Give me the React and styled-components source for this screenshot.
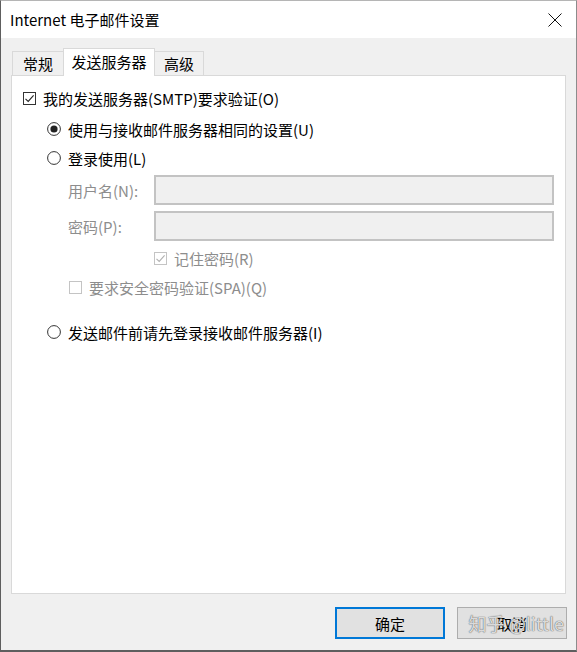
import React, { useState } from 'react'
import styled, { createGlobalStyle } from 'styled-components'

const Global = createGlobalStyle`
  html, body { margin: 0; padding: 0; background: #ffffff; }
  * { box-sizing: border-box; }
  body {
    font-family: "Noto Sans CJK SC", "Noto Sans", sans-serif;
    font-size: 15px;
    color: #000;
  }
`

const Window = styled.div`
  position: relative;
  width: 577px;
  height: 652px;
  display: flex;
  flex-direction: column;
  border-left: 1px solid #5e5e5e;
  border-right: 1px solid #8c8c8c;
  border-bottom: 2px solid #5e5e5e;
  border-top: 1px solid #b5b5b5;
  background: #f0f0f0;
`

const TitleBar = styled.div`
  height: 37px;
  background: #fff;
  display: flex;
  align-items: center;
  justify-content: space-between;
  padding: 0 14px 0 9px;
  flex-shrink: 0;
`

const Title = styled.span`
  font-size: 15px;
  line-height: 1;
`

const Body = styled.div`
  flex: 1;
  display: flex;
  flex-direction: column;
  padding: 10px 10px 0 10px;
`

const TabRow = styled.div`
  display: flex;
  align-items: flex-end;
  height: 28px;
  padding-left: 1px;
  position: relative;
  z-index: 1;
  margin-bottom: -1px;
`

const Tab = styled.div`
  width: ${p => p.$w}px;
  height: ${p => (p.$active ? 28 : 25)}px;
  display: flex;
  align-items: center;
  justify-content: center;
  white-space: nowrap;
  background: ${p => (p.$active ? '#fff' : '#f0f0f0')};
  border: 1px solid #d9d9d9;
  border-bottom: ${p => (p.$active ? 'none' : '1px solid #d9d9d9')};
  margin: 0 ${p => (p.$active ? -1 : 0)}px;
  padding-bottom: ${p => (p.$active ? 3 : 0)}px;
  font-size: 15px;
  line-height: 1;
`

const Panel = styled.div`
  height: 519px;
  background: #fff;
  border: 1px solid #d9d9d9;
  padding-top: 7px;
  display: flex;
  flex-direction: column;
`

const Row = styled.div`
  height: ${p => p.$h}px;
  margin-top: ${p => p.$mt || 0}px;
  padding-left: ${p => p.$indent}px;
  padding-right: 11px;
  display: flex;
  align-items: center;
  gap: 7px;
  color: ${p => (p.$disabled ? '#8d8d8d' : '#000')};
  line-height: 1;
  white-space: nowrap;
`

const FieldLabel = styled.span`
  width: 79px;
  flex-shrink: 0;
  color: #8d8d8d;
`

const TextBox = styled.div`
  flex: 1;
  height: 30px;
  background: #f0f0f0;
  border: 2px solid #c3c3c3;
`

const Footer = styled.div`
  display: flex;
  justify-content: flex-end;
  gap: 12px;
  padding: 13px 0 0 0;
`

const Button = styled.button`
  width: 110px;
  height: 32px;
  background: #e1e1e1;
  border: ${p => (p.$primary ? '2px solid #0078d7' : '1px solid #adadad')};
  font-family: "Noto Sans CJK SC", "Noto Sans", sans-serif;
  font-size: 15px;
  color: #000;
  padding: 0;
  margin-right: ${p => (p.$last ? -1 : 0)}px;
`

const Watermark = styled.div`
  position: absolute;
  right: 12px;
  bottom: 14px;
  font-family: "Noto Sans CJK SC", "Liberation Sans", sans-serif;
  font-size: 18px;
  color: rgba(255, 255, 255, 0.8);
  text-shadow: 0 0 1px rgba(80, 80, 80, 0.95), 0 0 1px rgba(80, 80, 80, 0.7);
  pointer-events: none;
`

const CheckBox = ({ checked, disabled }) => (
  <svg width="13" height="13" viewBox="0 0 13 13" style={{ flexShrink: 0 }}>
    <rect x="0.5" y="0.5" width="12" height="12" fill="#fff" stroke={disabled ? '#c4c4c4' : '#333'} />
    {checked && (
      <polyline
        points="2.5,6.8 5.2,9.4 10.6,3.4"
        fill="none"
        stroke={disabled ? '#b0b0b0' : '#222'}
        strokeWidth="1.1"
      />
    )}
  </svg>
)

const Radio = ({ checked }) => (
  <svg width="14" height="14" viewBox="0 0 14 14" style={{ flexShrink: 0 }}>
    <circle cx="7" cy="7" r="6.4" fill="#fff" stroke="#333" strokeWidth="1" />
    {checked && <circle cx="7" cy="7" r="3.6" fill="#222" />}
  </svg>
)

const CloseIcon = () => (
  <svg width="14" height="14" viewBox="0 0 14 14">
    <path d="M0.5 0.5 L13.5 13.5 M13.5 0.5 L0.5 13.5" stroke="#111" strokeWidth="1" fill="none" />
  </svg>
)

const tabs = [
  { id: 'general', label: '常规', w: 52 },
  { id: 'outgoing', label: '发送服务器', w: 92 },
  { id: 'advanced', label: '高级', w: 50 },
]

export default function App() {
  const [active] = useState('outgoing')
  return (
    <>
      <Global />
      <Window>
        <TitleBar>
          <Title>Internet 电子邮件设置</Title>
          <CloseIcon />
        </TitleBar>
        <Body>
          <TabRow>
            {tabs.map(t => (
              <Tab key={t.id} $active={t.id === active} $w={t.w}>
                {t.label}
              </Tab>
            ))}
          </TabRow>
          <Panel>
            <Row $h={30} $indent={11}>
              <CheckBox checked />
              我的发送服务器(SMTP)要求验证(O)
            </Row>
            <Row $h={32} $indent={35}>
              <Radio checked />
              使用与接收邮件服务器相同的设置(U)
            </Row>
            <Row $h={26} $indent={35}>
              <Radio />
              登录使用(L)
            </Row>
            <Row $h={38} $indent={56}>
              <FieldLabel>用户名(N):</FieldLabel>
              <TextBox />
            </Row>
            <Row $h={34} $indent={56}>
              <FieldLabel>密码(P):</FieldLabel>
              <TextBox />
            </Row>
            <Row $h={30} $indent={142} $disabled>
              <CheckBox checked disabled />
              记住密码(R)
            </Row>
            <Row $h={28} $indent={57} $disabled>
              <CheckBox disabled />
              要求安全密码验证(SPA)(Q)
            </Row>
            <Row $h={32} $mt={15} $indent={35}>
              <Radio />
              发送邮件前请先登录接收邮件服务器(I)
            </Row>
          </Panel>
          <Footer>
            <Button $primary>确定</Button>
            <Button $last>取消</Button>
          </Footer>
        </Body>
        <Watermark>知乎 @little</Watermark>
      </Window>
    </>
  )
}
